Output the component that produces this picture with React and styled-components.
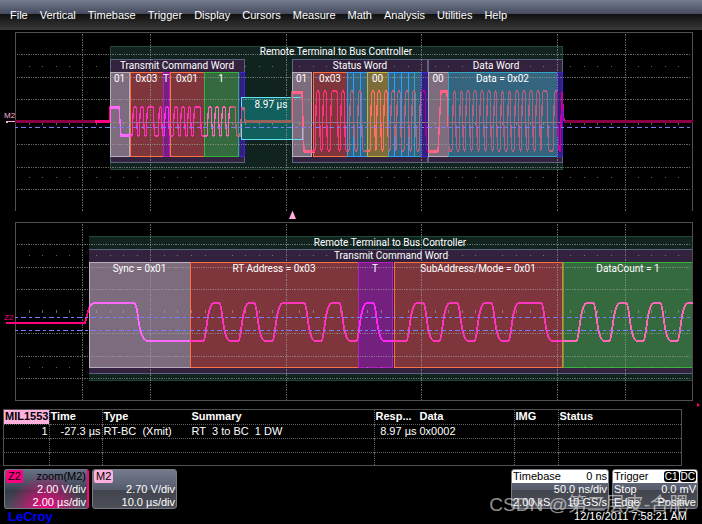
import React from 'react'
import styled, { createGlobalStyle } from 'styled-components'

const MENU = [
  'File',
  'Vertical',
  'Timebase',
  'Trigger',
  'Display',
  'Cursors',
  'Measure',
  'Math',
  'Analysis',
  'Utilities',
  'Help',
]

const PAINT = {
  bus: { fill: '#10231f', line: '#22463b' },
  word: { fill: '#33223e', line: '#5c6482' },
  sync: { fill: '#7d6b7e', line: '#b8b0bc' },
  field: { fill: '#7e363c', line: '#ff7040' },
  flag: { fill: '#73207e', line: '#b41fbe' },
  count: { fill: '#346a3d', line: '#34b438' },
  bit: { fill: '#35647f', line: '#30a0ff' },
  data: { fill: '#35647f', line: '#30a4c0' },
  code: { fill: '#7c6d3b', line: '#c4b440' },
  parity: { fill: '#31207f', line: '#3a24e0' },
  gap: { fill: '#12605d', line: '#5ce4f4' },
}

// [paint, x1, x2, label]
const MEMORY_FIELDS = [
  ['sync', 110, 129, '01'],
  ['field', 130, 163, '0x03'],
  ['flag', 163, 169, 'T'],
  ['field', 170, 204, '0x01'],
  ['count', 204, 238, '1'],
  ['parity', 239, 244],
  ['sync', 292, 311, '01'],
  ['field', 313, 347, '0x03'],
  ['bit', 347, 353],
  ['bit', 353, 360],
  ['bit', 360, 367],
  ['code', 367, 388, '00'],
  ['bit', 388, 394],
  ['bit', 394, 401],
  ['bit', 401, 408],
  ['bit', 408, 414],
  ['data', 414, 421],
  ['parity', 421, 428],
  ['sync', 428, 448, '00'],
  ['data', 448, 557, 'Data = 0x02'],
  ['parity', 557, 562],
]

const ZOOM_FIELDS = [
  ['sync', 89, 190, 'Sync = 0x01'],
  ['field', 190, 358, 'RT Address = 0x03'],
  ['flag', 358, 392, 'T'],
  ['field', 394, 562, 'SubAddress/Mode = 0x01'],
  ['count', 563, 693, 'DataCount = 1'],
]

// colour of the trace up to each x
const MEMORY_TRACE = [
  [95, '#8b0045'],
  [110, '#ff0080'],
  [130, '#ff68ff'],
  [163, '#ff30c0'],
  [169, '#ff28f4'],
  [204, '#ff30b8'],
  [231, '#ff68b8'],
  [245, '#b4647c'],
  [292, '#96635c'],
  [312, '#ff6488'],
  [347, '#ff3080'],
  [367, '#b4647c'],
  [388, '#ff7064'],
  [421, '#b4647c'],
  [428, '#a80090'],
  [448, '#ff6480'],
  [557, '#b4607c'],
  [565, '#c800a0'],
  [702, '#8b0045'],
]

const ZOOM_TRACE = [
  [89, '#ff0080'],
  [190, '#ff68ff'],
  [358, '#ff34bc'],
  [392, '#ff24f8'],
  [562, '#ff34bc'],
  [702, '#ff68b8'],
]

// x where each transition begins, the first one rising
const COMMAND_EDGES = [
  132, 136, 139, 143, 146, 153, 158, 161, 164, 168, 173, 177, 180, 184, 187,
  190, 193, 200, 207, 211, 214, 218, 221, 225, 228, 235,
]
const STATUS_EDGES = [
  315, 319, 322, 326, 330, 337, 340, 344, 349, 353, 357, 361, 370, 374, 376,
  380, 383, 387, 390, 394, 396, 400, 404, 408, 411, 415, 419, 425,
]
const DATA_EDGES = [
  452, 455, 459, 462, 465, 469, 472, 476, 479, 483, 486, 490, 493, 496, 500,
  503, 507, 510, 514, 518, 521, 525, 528, 532, 535, 539, 541, 547, 553, 557,
]
const ZOOM_EDGES = [
  203, 219, 238, 254, 272, 304, 321, 339, 356, 373, 406, 423, 439, 457, 474,
  491, 508, 541, 576, 593, 609, 626, 643, 660, 677,
]

function edgePath(edges, high, low, width) {
  return edges
    .map((x, i) => {
      const from = i % 2 ? high : low
      const to = i % 2 ? low : high
      const q = width / 3
      return `L${x} ${from} C${x + q} ${from} ${x + q} ${to} ${x + width} ${to}`
    })
    .join(' ')
}

const MEMORY_PATH = [
  'M110 121 V107 H119 L121 136',
  edgePath(COMMAND_EDGES, 107, 136, 2),
  'H240 L242 108 H244 L245 121 H292 V92 H302 L304 151',
  edgePath(STATUS_EDGES, 91, 151, 2),
  'H438 L441 91 H447 L449 151',
  edgePath(DATA_EDGES, 91, 151, 2),
  'H560 L562 92 L564 121',
].join(' ')

const ZOOM_PATH = [
  'M85 322 C88 318 87 303 95 303 H134 C139 303 137 341 148 341',
  edgePath(ZOOM_EDGES, 303, 341, 11),
  'H693',
].join(' ')

const DIV_X = [82, 150, 286, 421, 557, 625]
const MINOR_X = Array.from({ length: 49 }, (_, i) => i + 1)
  .filter(i => i % 5)
  .map(i => Math.round(15 + i * 13.54))

const COLUMNS = [45, 53, 88, 184, 44, 96, 44]

function TraceColors({ id, stops }) {
  let start = 0
  return (
    <linearGradient id={id} gradientUnits="userSpaceOnUse" x1="0" x2="702">
      {stops.map(([end, color]) => {
        const from = start / 702
        start = end
        return (
          <React.Fragment key={end}>
            <stop offset={from} stopColor={color} />
            <stop offset={end / 702} stopColor={color} />
          </React.Fragment>
        )
      })}
    </linearGradient>
  )
}

function Box({ paint, x1, x2, y1, y2, open }) {
  const { fill, line } = PAINT[paint]
  return (
    <>
      <rect x={x1} y={y1} width={x2 - x1 + 1} height={y2 - y1 + 1} fill={fill} />
      <path
        d={
          open
            ? `M${x1} ${y1 + 0.5}H${x2} M${x1} ${y2 + 0.5}H${x2}`
            : `M${x1 + 0.5} ${y1 + 0.5}H${x2 + 0.5}V${y2 + 0.5}H${x1 + 0.5}Z`
        }
        fill="none"
        stroke={line}
      />
    </>
  )
}

function Grid({ top, bottom, rows, dotRows, tickY }) {
  return (
    <g stroke="#a0a8a0" strokeOpacity="0.6">
      {rows.map(y => (
        <path key={y} d={`M17 ${y + 0.5}H691`} strokeDasharray="1 1 1 1 2 1" />
      ))}
      {DIV_X.map(x => (
        <path
          key={x}
          d={`M${x + 0.5} ${top + 2}V${bottom}`}
          strokeDasharray="2 1 1 1"
        />
      ))}
      {MINOR_X.map(x => (
        <path
          key={x}
          d={`M${x} ${dotRows[0] + 0.5}h1M${x} ${dotRows[1] + 0.5}h1M${
            x + 0.5
          } ${tickY}v3`}
        />
      ))}
    </g>
  )
}

function MemoryPlot() {
  return (
    <Plot viewBox="0 30 702 190" role="img" aria-label="M2 decoded trace">
      <defs>
        <TraceColors id="memoryTrace" stops={MEMORY_TRACE} />
      </defs>
      <g shapeRendering="crispEdges">
        <Box paint="bus" x1={110} x2={562} y1={46} y2={169} />
        <Box paint="word" x1={110} x2={244} y1={59} y2={162} />
        <Box paint="word" x1={292} x2={427} y1={59} y2={162} />
        <Box paint="word" x1={428} x2={562} y1={59} y2={162} />
        {MEMORY_FIELDS.map(([paint, x1, x2]) => (
          <Box key={x1} paint={paint} x1={x1} x2={x2} y1={72} y2={156} />
        ))}
        <rect x="241" y="97" width="51" height="42" fill={PAINT.gap.fill} />
        <path
          d="M241.5 97.5H302.5V139.5H241.5Z"
          fill="none"
          stroke={PAINT.gap.line}
        />
        <Grid
          top={32}
          bottom={211}
          rows={[54, 77, 99, 144, 167, 189]}
          dotRows={[66, 177]}
          tickY={122}
        />
        <path d="M110 122.5H562" stroke="#8c7c88" />
        <path d="M15.5 211V32.5H692.5V211" fill="none" stroke="#505050" />
        <path d="M15 121.5H95" stroke="#8b0045" strokeWidth="3" />
        <path d="M95 121.5H110" stroke="#ff0080" strokeWidth="3" />
        <path d="M245 121.5H292" stroke="#96635c" strokeWidth="3" />
        <path d="M564 121.5H693" stroke="#8b0045" strokeWidth="3" />
        <path d="M111 107.5H119M121 135.5H132" stroke="#ff68ff" strokeWidth="3" />
        <path
          d="M293 92H302M304 151H315M428 151H438M441 91H447"
          stroke="#ff6488"
          strokeWidth="3"
        />
        <path
          d={MEMORY_PATH}
          fill="none"
          stroke="url(#memoryTrace)"
          strokeWidth="1.4"
        />
        <path d="M15 127.5H692" stroke="#7c7cff" strokeDasharray="3 3 5 3" />
        <path d="M6 121.5H15M6 122.5H8" stroke="#ffb0dc" />
      </g>
      <Marker x="4" y="118" fill="#ffb0dc">
        M2
      </Marker>
      <Label x="336" y="55">
        Remote Terminal to Bus Controller
      </Label>
      <Label x="177" y="69">
        Transmit Command Word
      </Label>
      <Label x="360" y="69">
        Status Word
      </Label>
      <Label x="496" y="69">
        Data Word
      </Label>
      {MEMORY_FIELDS.filter(f => f[3]).map(([paint, x1, x2, text]) => (
        <Label key={x1} x={(x1 + x2) / 2} y="82">
          {text}
        </Label>
      ))}
      <Label x="271" y="108">
        8.97 µs
      </Label>
      <path d="M292.5 210.5L296 219H289Z" fill="#ffb0dc" />
    </Plot>
  )
}

function ZoomPlot() {
  return (
    <Plot viewBox="0 220 702 188" role="img" aria-label="Z2 zoomed trace">
      <defs>
        <TraceColors id="zoomTrace" stops={ZOOM_TRACE} />
        <clipPath id="zoomClip">
          <rect x="15" y="222" width="678" height="180" />
        </clipPath>
      </defs>
      <g shapeRendering="crispEdges" clipPath="url(#zoomClip)">
        <Box open paint="bus" x1={89} x2={692} y1={236} y2={380} />
        <Box open paint="word" x1={89} x2={692} y1={249} y2={373} />
        {ZOOM_FIELDS.map(([paint, x1, x2]) => (
          <Box key={x1} paint={paint} x1={x1} x2={x2} y1={262} y2={367} />
        ))}
        <Grid
          top={222}
          bottom={400}
          rows={[244, 267, 289, 333, 356, 378]}
          dotRows={[255, 367]}
          tickY={310}
        />
        <path d="M15.5 222.5H692.5V400.5H15.5Z" fill="none" stroke="#505050" />
        <path d="M15 322.5H86" stroke="#ff0080" strokeWidth="2" />
        <path
          d={ZOOM_PATH}
          fill="none"
          stroke="url(#zoomTrace)"
          strokeWidth="1.8"
        />
        <path
          d="M15 317.5H692M15 330.5H692"
          stroke="#7c7cff"
          strokeDasharray="3 3 5 3"
        />
      </g>
      <path d="M6 323H15" stroke="#ff0080" strokeWidth="2" />
      <Marker x="4" y="320" fill="#ff0080">
        Z2
      </Marker>
      <Label x="390" y="246">
        Remote Terminal to Bus Controller
      </Label>
      <Label x="391" y="259">
        Transmit Command Word
      </Label>
      {ZOOM_FIELDS.map(([paint, x1, x2, text]) => (
        <Label key={x1} x={(x1 + x2) / 2} y="272">
          {text}
        </Label>
      ))}
      <path d="M697 403L700 405L697 407Z" fill="#ff0080" />
    </Plot>
  )
}

export default function App() {
  return (
    <>
      <GlobalStyle />
      <Screen>
        <MenuBar>
          {MENU.map(item => (
            <MenuButton key={item} type="button">
              {item}
            </MenuButton>
          ))}
        </MenuBar>
        <MemoryPlot />
        <ZoomPlot />
        <TableWrapper>
          <DecodeTable>
            <colgroup>
              {COLUMNS.map((width, index) => (
                <Column key={index} $width={width} />
              ))}
              <col />
            </colgroup>
            <thead>
              <tr>
                <ProtocolCell>MIL1553</ProtocolCell>
                <th>Time</th>
                <th>Type</th>
                <PlainHead>Summary</PlainHead>
                <th>Resp...</th>
                <PlainHead>Data</PlainHead>
                <th>IMG</th>
                <th>Status</th>
              </tr>
            </thead>
            <tbody>
              <tr>
                <NumberCell>1</NumberCell>
                <NumberCell>-27.3 µs</NumberCell>
                <td>RT-BC&nbsp; (Xmit)</td>
                <PlainCell>RT&nbsp; 3 to BC&nbsp; 1 DW</PlainCell>
                <NumberCell>8.97 µs</NumberCell>
                <PlainCell>0x0002</PlainCell>
                <td />
                <td />
              </tr>
              {[2, 3].map(row => (
                <tr key={row}>
                  <td />
                  <td />
                  <td />
                  <PlainCell />
                  <td />
                  <PlainCell />
                  <td />
                  <td />
                </tr>
              ))}
            </tbody>
          </DecodeTable>
        </TableWrapper>
        <Footer>
          <Group>
            <Channel $active>
              <CardRow $dark>
                <Badge $color="#ff0080">Z2</Badge>
                <span>zoom(M2)</span>
              </CardRow>
              <CardRow $end>2.00 V/div</CardRow>
              <CardRow $end>2.00 µs/div</CardRow>
            </Channel>
            <Channel>
              <CardRow $dark>
                <Badge $color="#ffb0dc">M2</Badge>
              </CardRow>
              <CardRow $end>2.70 V/div</CardRow>
              <CardRow $end>10.0 µs/div</CardRow>
            </Channel>
          </Group>
          <Group>
            <Setup $width={98}>
              <CardTitle>
                <span>Timebase</span>
                <span>0 ns</span>
              </CardTitle>
              <CardRow $end>50.0 ns/div</CardRow>
              <CardRow>
                <span>2.00 kS</span>
                <span>10 GS/s</span>
              </CardRow>
            </Setup>
            <Setup $width={86}>
              <CardTitle>
                <span>Trigger</span>
                <Tags>
                  <Tag>C1</Tag>
                  <Tag>DC</Tag>
                </Tags>
              </CardTitle>
              <CardRow>
                <span>Stop</span>
                <span>0.0 mV</span>
              </CardRow>
              <CardRow>
                <span>Edge</span>
                <span>Positive</span>
              </CardRow>
            </Setup>
          </Group>
          <Watermark>CSDN @第二层皮-合肥</Watermark>
        </Footer>
        <StatusLine>
          <Brand>LeCroy</Brand>
          <time>12/16/2011 7:58:21 AM</time>
        </StatusLine>
      </Screen>
    </>
  )
}

const GlobalStyle = createGlobalStyle`
  * {
    box-sizing: border-box;
  }

  body {
    margin: 0;
    background: #000;
    overflow: hidden;
  }
`

const Screen = styled.main`
  display: flex;
  flex-direction: column;
  background: #000;
  color: #fff;
  font-family: 'Liberation Sans', Arial, sans-serif;
  font-size: 11px;
  line-height: 13px;
`

const MenuBar = styled.nav`
  display: flex;
  align-items: center;
  gap: 12px;
  height: 30px;
  padding: 0 10px;
  background: linear-gradient(
    #747d90 0,
    #454a5c 14px,
    #101010 14px,
    #3a3a3a 30px
  );
`

const MenuButton = styled.button`
  padding: 0;
  border: 0;
  background: none;
  color: #fff;
  font: inherit;
  cursor: pointer;
`

const Plot = styled.svg`
  display: block;
  width: 100%;
`

const Label = styled.text`
  fill: #fff;
  font-family: Roboto, sans-serif;
  font-size: 10px;
  text-anchor: middle;
`

const Marker = styled.text`
  font-size: 8px;
`

const TableWrapper = styled.div`
  margin: 1px 20px 3px 3px;
  border: 1px solid #505050;
`

const DecodeTable = styled.table`
  width: 100%;
  table-layout: fixed;
  border-collapse: collapse;

  th,
  td {
    height: 14px;
    padding: 0 1px;
    border-left: 1px dotted #606060;
    line-height: 13px;
    text-align: left;
    white-space: nowrap;
  }

  tbody tr {
    border-top: 1px dotted #606060;
  }

  th:first-child,
  td:first-child {
    border-left: 0;
  }

  tbody tr:last-child td {
    height: 13px;
  }
`

const Column = styled.col`
  width: ${props => props.$width}px;
`

const ProtocolCell = styled.th`
  background: #ffb0dc;
  color: #000;
`

const PlainHead = styled.th`
  && {
    border-left-color: transparent;
  }
`

const PlainCell = styled.td`
  && {
    border-left-color: transparent;
  }
`

const NumberCell = styled.td`
  && {
    text-align: right;
  }
`

const Footer = styled.footer`
  position: relative;
  display: flex;
  justify-content: space-between;
  padding: 0 4px;
`

const Group = styled.div`
  display: flex;
  gap: 3px;
`

const Card = styled.section`
  height: 40px;
  border: 1px solid #767a84;
  border-radius: 3px;
  overflow: hidden;
  background: linear-gradient(#747b8d 0, #555b6b 20px, #42454d 20px, #4c4f57);
`

const Channel = styled(Card)`
  width: 85px;
  ${props =>
    props.$active &&
    `
    border-right: 2px solid #ff0080;
    background:
      radial-gradient(ellipse at 50% 110%, #ff0080 0, rgba(255, 0, 128, 0) 65%),
      linear-gradient(#667084 0, #3a4252 20px, #363b46 20px, #4a4f5c);
  `}
`

const Setup = styled(Card)`
  width: ${props => props.$width}px;
`

const CardRow = styled.div`
  display: flex;
  justify-content: ${props => (props.$end ? 'flex-end' : 'space-between')};
  padding: 0 1px;
  color: ${props => (props.$dark ? '#000' : '#fff')};
  white-space: nowrap;
`

const CardTitle = styled(CardRow)`
  background: #fff;
  color: #000;
`

const Badge = styled.span`
  padding: 0 2px;
  border-radius: 2px;
  background: ${props => props.$color};
`

const Tags = styled.span`
  display: flex;
  gap: 1px;
  padding: 1px 0;
`

const Tag = styled.span`
  padding: 0 1px;
  border-radius: 3px;
  background: #000;
  color: #fff;
  font-size: 10px;
  line-height: 11px;
`

const Watermark = styled.div`
  position: absolute;
  right: 14px;
  bottom: -8px;
  color: rgba(225, 225, 225, 0.65);
  font-family: 'Liberation Sans', 'Noto Sans CJK SC', sans-serif;
  font-size: 19px;
  line-height: 24px;
  white-space: nowrap;
`

const StatusLine = styled.div`
  display: flex;
  justify-content: space-between;
  padding: 1px 15px 0 8px;
`

const Brand = styled.strong`
  color: #0000ff;
  font-size: 13px;
`
